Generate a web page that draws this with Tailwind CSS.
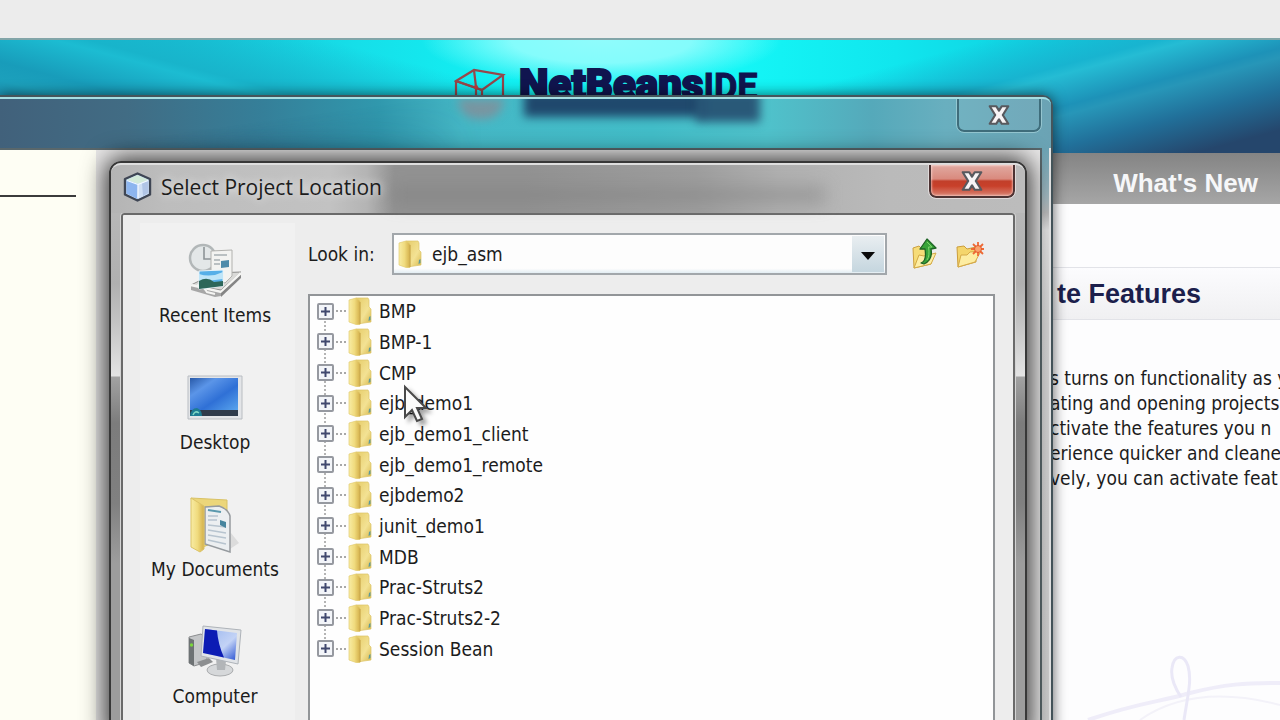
<!DOCTYPE html>
<html lang="en">
<head>
    <meta charset="UTF-8">
    <meta name="viewport" content="width=device-width, initial-scale=1.0">
    <title>Select Project Location</title>
    <script src="https://cdn.jsdelivr.net/npm/@tailwindcss/browser@4"></script>
</head>
<body class="relative h-screen overflow-hidden bg-[#fdfdfe] font-['DejaVu_Sans_Condensed','DejaVu_Sans',sans-serif] text-[19px] text-[#1c1c1c]">

    <!-- Shared icons -->
    <svg class="absolute h-0 w-0" aria-hidden="true">
        <defs>
            <linearGradient id="folderFront" x1="0" x2="1" y1="0" y2="0">
                <stop offset="0" stop-color="#f8eca4"/>
                <stop offset=".5" stop-color="#f0db7e"/>
                <stop offset="1" stop-color="#d4b04a"/>
            </linearGradient>
            <linearGradient id="folderBack" x1="0" x2="1" y1="0" y2="1">
                <stop offset="0" stop-color="#e6cc68"/>
                <stop offset=".6" stop-color="#f3e294"/>
                <stop offset="1" stop-color="#d8b84c"/>
            </linearGradient>
            <symbol id="folder" viewBox="0 0 24 28">
                <path d="M8 1 L20 1 L21 3 L21 10 L23 12 L23 25 L9 27 Z" fill="url(#folderBack)" stroke="#dcc468" stroke-width=".7"/>
                <path d="M1 3 L8 1 L12 4 L12 27.500 L8 27.500 L1 25 Z" fill="url(#folderFront)" stroke="#e2cc70" stroke-width=".7"/>
                <path d="M12 5 L12 27" stroke="#c4a044" stroke-width="1"/>
                <path d="M21 20 L22.500 19 L22.500 23 L20.500 24 Z" fill="#5b9a9a"/>
            </symbol>
            <symbol id="cross" viewBox="0 0 22 22">
                <path d="M2.500 3 H8.500 L11 7 L13.500 3 H19.500 L14.500 11 L19.500 19 H13.500 L11 15 L8.500 19 H2.500 L7.500 11 Z" fill="#f7f4f5" stroke="#58595e" stroke-width="2" stroke-linejoin="round"/>
            </symbol>
        </defs>
    </svg>

    <!-- IDE welcome page -->
    <div class="h-[38px] bg-[#ececec]"></div>
    <header class="relative h-[115px] overflow-hidden border-t-2 border-[#82a5a8] bg-[linear-gradient(90deg,#17b4cc_0%,#17c4d8_14%,#16dfe9_28%,#12eff2_38%,#14f6f6_58%,#10e6ee_70%,#10cfe0_82%,#14bcd4_93%,#18a8c6_100%)]">
        <div class="absolute inset-0 bg-[linear-gradient(195deg,transparent_56%,#18b4cb_70%,#1cbcd2_72%,#189cba_80%,#1ca0bc_84%,#197c9e_92%,#1c5f88_100%)]"></div>
        <div class="absolute inset-0 bg-[linear-gradient(165deg,transparent_58%,#18b4d0_68%,#25bcd4_70%,#1d92b8_77%,#2796b8_79%,#21709a_86%,#25466c_95%)]"></div>
        <div class="absolute inset-0 bg-[radial-gradient(ellipse_180px_46px_at_47%_0%,#8ffcfc,#84fcfc_50%,transparent)]"></div>
        <div class="relative flex items-start pt-[20px] pl-[454px]">
            <svg class="mt-[7px] h-[56px] w-[52px]" viewBox="0 0 52 56" fill="none" stroke="#96474b" stroke-width="2.200" aria-hidden="true">
                <path d="M2 14 L20 3 L49 8 L28 23 Z M2 14 L2 38 L28 54 L28 23 M49 8 L49 36 L28 54"/>
                <path d="M20 3 L22 20 L22 34 M2 14 L28 23" />
                <circle cx="22" cy="20" r="2" fill="#c0393c" stroke="none"/>
            </svg>
            <h1 class="pl-[13px] font-[Roboto,sans-serif] text-[42px] leading-[50px] font-black whitespace-nowrap text-[#10154f] [-webkit-text-stroke:2px_#10154f]">NetBeans<span class="text-[36px] font-bold [-webkit-text-stroke:1px_#10154f]">IDE</span></h1>
        </div>
    </header>
    <nav class="flex h-[51px] items-center justify-end bg-linear-to-b from-[#848484] to-[#a6a6a6] pt-[10px] pr-[22px] font-['Liberation_Sans',sans-serif] text-[26px] font-bold text-[#f6f7f9]">
        <a href="#">What's New</a>
    </nav>
    <section class="ml-auto w-[232px] pt-[63px]">
        <h2 class="h-[53px] border-y border-[#e2e3e8] bg-linear-to-b from-[#fcfcfe] to-[#f0f0f2] pl-[9px] font-['Liberation_Sans',sans-serif] text-[27px] leading-[53px] font-bold whitespace-nowrap text-[#1c1f4c]">te Features</h2>
        <p class="pt-[46px] pl-[2px] leading-[25px] whitespace-nowrap">
            s turns on functionality as y<br>
            ating and opening projects<br>
            ctivate the features you n<br>
            erience quicker and cleane<br>
            vely, you can activate feat
        </p>
    </section>
    <svg class="absolute right-0 bottom-0 h-[66px] w-[200px]" viewBox="0 0 200 66" fill="none" aria-hidden="true">
        <path d="M8 66 C60 48 80 48 110 39 C145 30 165 29 200 29" stroke="#efedf9" stroke-width="4"/>
        <path d="M60 66 C100 38 150 38 200 51" stroke="#f3f2f9" stroke-width="2"/>
        <path d="M104 66 C108 40 112 26 108 12 C104 0 94 0 92 14 C90 26 97 37 101 43" stroke="#eae8f7" stroke-width="3"/>
    </svg>

    <!-- Wizard window -->
    <div class="absolute top-[95px] right-[227px] -bottom-4 left-0 flex flex-col rounded-tr-[10px] border-t-2 border-r-2 border-[#45555b] shadow-[0_0_14px_rgba(0,0,0,.6)]">
        <div class="relative flex h-[51px] shrink-0 justify-end overflow-hidden rounded-tr-[8px] border-t-2 border-[#a6dfe3] bg-[linear-gradient(90deg,#41617b_0%,#416c84_12%,#357f99_25%,#3098ad_36%,#45b8c6_44%,#42bdc8_62%,#4fc2cb_73%,#55a9ba_83%,#69afbf_90%,#6ba3b4_100%)]">
            <div class="absolute inset-0 bg-[linear-gradient(172deg,transparent_30%,#1f5474_65%,#256488_85%,transparent)] opacity-60 [mask-image:linear-gradient(90deg,transparent_8%,black_20%,transparent_46%)]"></div>
            <div class="absolute top-0 left-[458px] h-[20px] w-[46px] rounded-b-full bg-[#9b7f88]/60 blur-[5px]"></div>
            <div class="absolute -top-2 left-[524px] h-[26px] w-[178px] bg-[#1c3c63]/90 blur-[5px]"></div>
            <div class="absolute -top-2 left-[696px] h-[31px] w-[64px] bg-[#23466a]/85 blur-[5px]"></div>
            <button aria-label="Close wizard" class="relative mr-[10px] flex h-[33px] w-[84px] items-center justify-center rounded-b-[7px] border-2 border-t-0 border-[#3f6d7b] bg-white/5 outline-1 outline-[#a6d3da]/70">
                <svg class="h-[24px] w-[24px]"><use href="#cross"/></svg>
            </button>
        </div>
        <div class="flex min-h-0 flex-1 border-r-2 border-[#e6e6e6] bg-[linear-gradient(180deg,#6ba3b4_0%,#9db5bd_8%,#b8b8b8_11%,#e0e0e0_14%,#d2d2d2_30%,#cccccc_100%)] pr-[7px]">
            <div class="flex flex-1 border-t-2 border-r-2 border-[#59676b] bg-[#e9e8e8]">
                <div class="w-[96px] bg-[#fefef4] pt-[45px]">
                    <hr class="mr-[20px] border-t-2 border-[#3b3b3b]">
                </div>
            </div>
        </div>
    </div>

    <!-- Select Project Location dialog -->
    <div role="dialog" aria-labelledby="dialog-title" class="absolute top-[161px] right-[253px] -bottom-4 left-[109px] flex flex-col rounded-t-[12px] border-2 border-[#383838] bg-[linear-gradient(180deg,#bdbdbd_0px,#b6b6b6_60px,#b0b0b0_120px,#c4c4c4_160px,#e4e4e4_213px,#a2a2a2_214px,#7c7c7c_260px,#808080_340px,#9d9d9d_400px)] shadow-[0_0_24px_3px_rgba(0,0,0,.8)]">
        <div class="relative flex h-[50px] shrink-0 items-start justify-between rounded-t-[10px] border-t-2 border-[#dedede] bg-[linear-gradient(90deg,#b4b4b4_0%,#bdbdbd_6%,#c2c2c2_24%,#b4b4b4_28%,#929292_31%,#929292_45%,#9e9e9e_64%,#b0b0b0_73%,#bababa_85%,#bcbcbc_100%)]">
            <div class="absolute top-[20px] right-[200px] left-[280px] h-[20px] bg-[#7c7c7c]/40 blur-[8px]"></div>
            <div class="relative flex items-center gap-[9px] pt-[7px] pl-[12px]">
                <svg class="h-[30px] w-[29px]" viewBox="0 0 29 30" stroke-linejoin="round" aria-hidden="true">
                    <path d="M14.500 1.500 L27 7 L27 22.500 L14.500 28.500 L2 22.500 L2 7 Z" fill="#c3d8f5" stroke="#3f4654" stroke-width="2.400"/>
                    <path d="M3.500 8 L14.500 3 L25.500 8 L15 12 Z" fill="#d3ead9"/>
                    <path d="M3.500 8 L15 12 L14.500 27 L3.500 21.500 Z" fill="#8db5ef"/>
                    <path d="M15 12 L25.500 8 L25.500 21.500 L14.500 27 Z" fill="#cfdff5"/>
                    <path d="M19 11 L25 9 L25 21 L20 24 Z" fill="#9cb4dc" opacity=".6"/>
                    <path d="M4 8.500 L15 12.500 L25 8.500 M15 12.500 V26" fill="none" stroke="#f3f9ff" stroke-width="1.200"/>
                </svg>
                <h2 id="dialog-title" class="font-['Open_Sans','Noto_Sans',sans-serif] text-[21px] leading-[30px] whitespace-nowrap [text-shadow:0_0_10px_white]">Select Project Location</h2>
            </div>
            <button aria-label="Close dialog" class="relative mr-[10px] flex h-[33px] w-[86px] items-center justify-center rounded-b-[7px] border-2 border-t-0 border-[#4d3333] bg-[linear-gradient(180deg,#e0aaa1_0%,#d98a7e_45%,#c23f2a_52%,#c8402a_68%,#d98474_100%)] outline-1 outline-[#e0dada] inset-shadow-[0_0_2px_1px_rgba(255,230,225,.6)]">
                <svg class="h-[24px] w-[24px]"><use href="#cross"/></svg>
            </button>
        </div>

        <div class="mx-[10px] flex min-h-0 flex-1 rounded-t-[3px] border-2 border-[#6a6a6a] bg-[#ededed] outline-1 outline-[#d4d4d4]">
            <!-- Places bar -->
            <nav class="mt-[8px] ml-[17px] flex w-[155px] shrink-0 flex-col bg-[#f1f1f1] pr-[5px]">
                <button class="flex h-[127px] shrink-0 flex-col items-center pt-[20px]">
                    <svg class="h-[56px] w-[56px] shrink-0" viewBox="0 0 56 56" aria-hidden="true">
                        <path d="M4 42 L32 36 L54 29 L54 34 L34 53 L28 54 L4 47 Z" fill="#a7a7a7"/>
                        <path d="M4 42 L28 30 L54 29 L34 47 Z" fill="#d9d9d7" stroke="#8e8e8c"/>
                        <circle cx="16" cy="15" r="13" fill="#e3e7e8" stroke="#b2b7b8" stroke-width="2.500"/>
                        <path d="M17 4 V16 H25" fill="none" stroke="#8d9497" stroke-width="1.600"/>
                        <path d="M24 8 L45 7 L45 33 L38 40 L24 36 Z" fill="#f3f3f1" stroke="#b1b1ae"/>
                        <path d="M27 12 H40 M27 17 H33 M27 21 H33" stroke="#a8b0b3" stroke-width="1.400"/>
                        <path d="M34 18 L42 17 L42 24 L34 25 Z" fill="#4e8baa"/>
                        <path d="M4 42 L34 49 L54 30" fill="none" stroke="#f5f5f3" stroke-width="2.500"/>
                        <path d="M10 42 L17 45 L20 49 L28 51" fill="none" stroke="#f5f5f3" stroke-width="2"/>
                        <path d="M12 28 L36 27 L36 43 L12 46 Z" fill="#56afe8" stroke="#e8f4fa"/>
                        <path d="M12 31 Q24 35 36 29 L36 36 L12 39 Z" fill="#bfe5f8"/>
                        <path d="M12 38 Q20 33 27 39 L36 38 L36 43 L12 46 Z" fill="#2d6659"/>
                        <path d="M34 50 L54 32 L54 35 L34 54 Z" fill="#858585"/>
                    </svg>
                    <span class="mt-[4px] leading-[24px]">Recent Items</span>
                </button>
                <button class="flex h-[127px] shrink-0 flex-col items-center pt-[20px]">
                    <svg class="h-[56px] w-[56px] shrink-0" viewBox="0 0 56 56" aria-hidden="true">
                        <defs>
                            <linearGradient id="wallpaper" x1="0" x2="1" y1="0" y2="1">
                                <stop offset="0" stop-color="#2859a8"/>
                                <stop offset=".28" stop-color="#5b95e8"/>
                                <stop offset=".6" stop-color="#2f70d6"/>
                                <stop offset="1" stop-color="#5aa6ee"/>
                            </linearGradient>
                        </defs>
                        <path d="M1 6 H55 V49 H1 Z" fill="#e3e5e8" stroke="#b9bdc2"/>
                        <path d="M3 8 H51 V41 H3 Z" fill="url(#wallpaper)"/>
                        <path d="M3 40 H51 V46 H3 Z" fill="#2f3b4b"/>
                        <path d="M3 46 Q4 38 10 38 Q15 40 15 46 Z" fill="#1d7c92"/>
                        <path d="M6 45 Q8 40 12 43" fill="none" stroke="#7fd8c4" stroke-width="1.500"/>
                    </svg>
                    <span class="mt-[4px] leading-[24px]">Desktop</span>
                </button>
                <button class="flex h-[127px] shrink-0 flex-col items-center pt-[20px]">
                    <svg class="h-[56px] w-[56px] shrink-0" viewBox="0 0 56 56" aria-hidden="true">
                        <path d="M40 54 L52 46 L44 36 Z" fill="#dcdcdc"/>
                        <path d="M4 1 L40 3 L40 40 L16 50 Z" fill="#ecd67a" stroke="#d9c265"/>
                        <path d="M18 10 L32 9 Q41 12 43 19 L43 55 L18 47 Z" fill="#eceff1" stroke="#969b9f" stroke-width="1.500"/>
                        <path d="M21 13 L34 15" stroke="#5b99ae" stroke-width="2"/>
                        <path d="M21 19 H31 M21 23 H30 M21 28 L39 30 M21 33 L39 36 M21 38 L39 41 M21 43 L39 47" stroke="#b7c4cf" stroke-width="1.300"/>
                        <path d="M33 23 L39 25 L39 31 L33 28 Z" fill="#47859e"/>
                        <path d="M4 1 L17 9 L17 52 L13 55 L4 50 Z" fill="url(#folderFront)" stroke="#dcc468"/>
                    </svg>
                    <span class="mt-[4px] leading-[24px]">My Documents</span>
                </button>
                <button class="flex h-[127px] shrink-0 flex-col items-center pt-[20px]">
                    <svg class="h-[56px] w-[56px] shrink-0" viewBox="0 0 56 56" aria-hidden="true">
                        <defs>
                            <linearGradient id="crt" x1="0" x2="1" y1="0" y2="1">
                                <stop offset="0" stop-color="#98b4ec"/>
                                <stop offset=".6" stop-color="#c3d3f6"/>
                                <stop offset="1" stop-color="#2a52d2"/>
                            </linearGradient>
                        </defs>
                        <path d="M2 13 L14 10 L20 14 L20 38 L7 42 L2 39 Z" fill="#c4c6c8" stroke="#8b8d8f"/>
                        <path d="M2 14 L7 16 L7 42 L2 39 Z" fill="#6d7274"/>
                        <circle cx="4.500" cy="21" r="1.700" fill="#79d63b"/>
                        <path d="M10 38 L22 34 L26 38 L14 43 Z" fill="#8d8f91"/>
                        <ellipse cx="33" cy="46" rx="13" ry="6" fill="#d6d8da" stroke="#aaacae"/>
                        <path d="M29 34 L39 37 L38 46 H30 Z" fill="#b2b5b8"/>
                        <path d="M16 2 L54 6 L51 40 L14 32 Z" fill="#e1e4e8" stroke="#aeb3b9"/>
                        <path d="M18 5 L50 9 L48 36 L16 29 Z" fill="url(#crt)"/>
                        <path d="M18 5 L30 6.500 Q31 20 37 33.500 L16 29 Z" fill="#0c1cb4"/>
                    </svg>
                    <span class="mt-[4px] leading-[24px]">Computer</span>
                </button>
            </nav>

            <main class="flex min-w-0 flex-1 flex-col pt-[18px] pr-[18px] pl-[13px]">
                <div class="flex items-center">
                    <label for="look-in" class="w-[84px] shrink-0 leading-[24px]">Look in:</label>
                    <div class="relative h-[42px] min-w-0 flex-1">
                        <select id="look-in" class="h-full w-full appearance-none border-2 border-[#a2a7ab] bg-[linear-gradient(180deg,#fdfdfd_0%,#fdfdfd_88%,#e2edf2_100%)] pl-[38px] leading-[24px]">
                            <option>ejb_asm</option>
                        </select>
                        <svg class="pointer-events-none absolute top-[7px] left-[6px] h-[28px] w-[24px]"><use href="#folder"/></svg>
                        <div class="pointer-events-none absolute top-[3px] right-[3px] bottom-[3px] flex w-[32px] items-center justify-center bg-linear-to-b from-[#e9eef1] to-[#c5d6df] pt-[3px]">
                            <svg class="h-[8px] w-[14px]" viewBox="0 0 14 8"><path d="M0 0 H14 L7 8 Z" fill="#0a0a0a"/></svg>
                        </div>
                    </div>
                    <button aria-label="Up one level" class="ml-[24px]">
                        <svg class="h-[32px] w-[28px]" viewBox="0 0 28 32">
                            <path d="M2 10 L8 8 L11 11 L19 9 L20 26 L3 30 Z" fill="#f6dc78" stroke="#cba041"/>
                            <path d="M3 30 L8 17 L13 18 L25 15 L20 26 Z" fill="#fdeea6" stroke="#d3a945"/>
                            <path d="M10 25 Q16 23 14 11 L9 11 L16 1 L25 10 L20 11 Q22 22 13 26 Z" fill="#38a43a" stroke="#1d6324" stroke-width="1.300" stroke-linejoin="round"/>
                            <path d="M16 4 L21 9 L17.500 9 Q19 18 16 22" fill="none" stroke="#7fd46c"/>
                        </svg>
                    </button>
                    <button aria-label="Create new folder" class="mr-[10px] ml-[16px]">
                        <svg class="h-[32px] w-[30px]" viewBox="0 0 30 32">
                            <path d="M2 9 L9 8 L12 11 L21 9 L21 24 L3 29 Z" fill="#f4d56c" stroke="#cb9d3c"/>
                            <path d="M3 29 L6 17 L12 17 L15 14 L26 13 L20 24 Z" fill="#fdeda2" stroke="#d6aa48"/>
                            <g stroke="#ee6a35" stroke-width="1.800">
                                <path d="M23 4 V18 M16 11 H29 M18 6 L28 16 M28 6 L18 16"/>
                            </g>
                            <circle cx="23" cy="11" r="3.500" fill="#f9a36e" stroke="#e4562a"/>
                        </svg>
                    </button>
                </div>

                <!-- Folder tree, rows are filled in by the script below -->
                <div class="mt-[19px] min-h-0 flex-1 border-2 border-b-0 border-[#929598] bg-[#fefefe]">
                    <ul id="folder-tree" class="relative grid h-[368px] grid-rows-12 before:absolute before:top-[14px] before:bottom-[14px] before:left-[14px] before:border-l-2 before:border-dotted before:border-[#b4b4b4]"></ul>
                </div>
            </main>
        </div>
    </div>

    <!-- Mouse pointer -->
    <svg class="absolute top-[384px] left-[402px] h-[42px] w-[32px] drop-shadow-[4px_4px_2px_rgba(0,0,0,.35)]" viewBox="0 0 32 42" aria-hidden="true">
        <path d="M3 3 V33 L10 26 L15 37 L20 35 L15 24 H24 Z" fill="#fbfbfb" stroke="#4a4a4a" stroke-width="2"/>
    </svg>

    <script>
        const folders = [
            'BMP', 'BMP-1', 'CMP', 'ejb_demo1', 'ejb_demo1_client', 'ejb_demo1_remote',
            'ejbdemo2', 'junit_demo1', 'MDB', 'Prac-Struts2', 'Prac-Struts2-2', 'Session Bean'
        ];

        const tree = document.getElementById('folder-tree');

        folders.forEach(name => {
            const row = document.createElement('li');
            row.className = 'relative flex items-center pl-[7px]';
            row.innerHTML = `
                <button aria-label="Expand ${name}" class="h-[17px] w-[17px] rounded-[2px] border-2 border-[#9699a0] bg-[#f3f5f9]">
                    <svg class="h-[13px] w-[13px]" viewBox="0 0 13 13"><path d="M6.500 2 V11 M2 6.500 H11" stroke="#40486e" stroke-width="2"/></svg>
                </button>
                <span class="mr-[2px] ml-[2px] w-[10px] border-t-2 border-dotted border-[#a8a8a8]"></span>
                <svg class="h-[28px] w-[24px]"><use href="#folder"/></svg>
                <span class="pl-[7px] leading-[24px]">${name}</span>
            `;
            tree.appendChild(row);
        });
    </script>

</body>
</html>
